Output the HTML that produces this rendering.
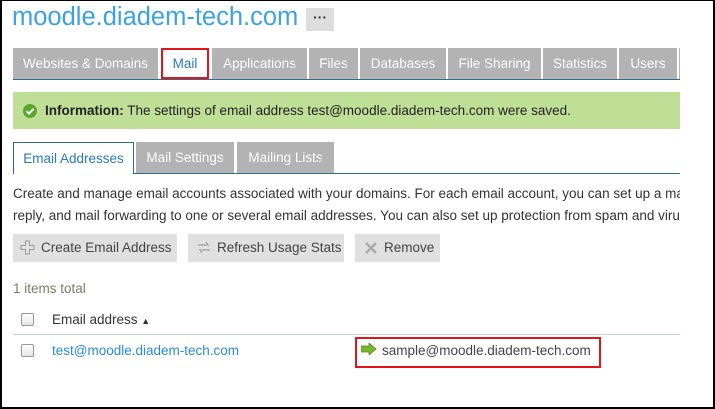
<!DOCTYPE html>
<html><head><style>
*{box-sizing:border-box;margin:0;padding:0}
body{width:715px;height:409px;background:#fff;font-family:"Liberation Sans",sans-serif;position:relative;overflow:hidden}
.a{position:absolute}
.clip{position:absolute;left:0;top:0;width:680px;height:409px;overflow:hidden}
.frame{position:absolute;left:0;top:0;width:715px;height:409px;border:2px solid #000;border-top-width:1px;pointer-events:none}
.tab{position:absolute;top:48px;height:31px;background:#b3b3b3;color:#fff;font-size:13.5px;line-height:32px;text-align:center}
.st{position:absolute;top:142px;height:31px;background:#b3b3b3;color:#fff;font-size:13.5px;line-height:31px;text-align:center}
.btn{position:absolute;top:234px;height:28px;background:#e0e0e0;color:#444;font-size:13.5px;line-height:28px}
.cb{position:absolute;width:13px;height:13px;border:1px solid #999;border-radius:2px;background:linear-gradient(#fff,#e4e4e4)}
</style></head><body>
<div class="clip">
<div class="a" style="left:12px;top:3px;font-size:25.5px;color:#3ba3e0">moodle.diadem-tech.com</div>
<div class="a" style="left:306px;top:8px;width:28px;height:23px;background:#ddd;text-align:center;font-size:14px;line-height:18px;font-weight:bold;color:#333">···</div>
<div class="tab" style="left:13px;width:145px">Websites &amp; Domains</div>
<div class="tab" style="left:161px;width:48px;background:#fff;color:#2a7ab8;border:2px solid #e4141b;line-height:28px">Mail</div>
<div class="tab" style="left:212px;width:95px">Applications</div>
<div class="tab" style="left:309px;width:49px">Files</div>
<div class="tab" style="left:360px;width:86px">Databases</div>
<div class="tab" style="left:448px;width:93px">File Sharing</div>
<div class="tab" style="left:543px;width:74px">Statistics</div>
<div class="tab" style="left:619px;width:58px">Users</div>
<div class="tab" style="left:679px;width:20px"></div>
<div class="a" style="left:13px;top:79px;width:680px;height:1px;background:#2f6d8f"></div>
<div class="a" style="left:13px;top:92px;width:680px;height:37px;background:#bfdf96"></div>
<div class="a" style="left:23px;top:104px;width:14px;height:14px;border-radius:50%;background:#5aa832"></div>
<svg class="a" style="left:23px;top:104px" width="14" height="14"><path d="M3.5 7.2L6 9.6L10.5 4.8" stroke="#fff" stroke-width="2" fill="none"/></svg>
<div class="a" style="left:45px;top:103px;font-size:13.5px;color:#222"><b>Information:</b> The settings of email address test@moodle.diadem-tech.com were saved.</div>
<div class="st" style="left:13px;width:121px;background:#fff;color:#2a7ab8;border:1px solid #2f6d8f;border-bottom:none;height:32px">Email Addresses</div>
<div class="st" style="left:136px;width:98px">Mail Settings</div>
<div class="st" style="left:237px;width:97px">Mailing Lists</div>
<div class="a" style="left:134px;top:173px;width:560px;height:1px;background:#2f6d8f"></div>
<div class="a" style="left:13px;top:183px;font-size:13.5px;line-height:22px;color:#333;white-space:nowrap">Create and manage email accounts associated with your domains. For each email account, you can set up a mailbox, auto-<br>reply, and mail forwarding to one or several email addresses. You can also set up protection from spam and viruses.</div>
<div class="btn" style="left:13px;width:164px;padding-left:28px">Create Email Address</div>
<svg class="a" style="left:20px;top:240px" width="15" height="15"><path d="M5.5 1h4v4.5h4.5v4h-4.5v4.5h-4v-4.5h-4.5v-4h4.5z" fill="none" stroke="#999"/></svg>
<div class="btn" style="left:188px;width:156px;padding-left:29px">Refresh Usage Stats</div>
<svg class="a" style="left:196px;top:240px" width="16" height="15"><path d="M2 5h10l-2-3M14 10H4l2 3" fill="none" stroke="#aaa" stroke-width="1.5"/></svg>
<div class="btn" style="left:355px;width:85px;padding-left:29px">Remove</div>
<svg class="a" style="left:364px;top:241px" width="14" height="14"><path d="M2 2l10 10M12 2L2 12" stroke="#aaa" stroke-width="2.5"/></svg>
<div class="a" style="left:13px;top:281px;font-size:13.5px;color:#7a7a6a">1 items total</div>
<div class="cb" style="left:21px;top:313px"></div>
<div class="a" style="left:52px;top:312px;font-size:13.5px;color:#333">Email address <span style="font-size:9px">&#9650;</span></div>
<div class="a" style="left:13px;top:334px;width:680px;height:1px;background:#c5d0da"></div>
<div class="cb" style="left:21px;top:344px"></div>
<div class="a" style="left:52px;top:343px;font-size:13.5px;color:#2a8ad8">test@moodle.diadem-tech.com</div>
<div class="a" style="left:355px;top:337px;width:246px;height:31px;border:2px solid #e4141b"></div>
<svg class="a" style="left:361px;top:343px" width="16" height="12"><path d="M0 3h8V0l7 6-7 6V9H0z" fill="#7bb530" stroke="#4f8a1a" stroke-width=".8"/></svg>
<div class="a" style="left:382px;top:343px;font-size:13.5px;color:#444">sample@moodle.diadem-tech.com</div>
</div>
<div class="frame"></div>
</body></html>
